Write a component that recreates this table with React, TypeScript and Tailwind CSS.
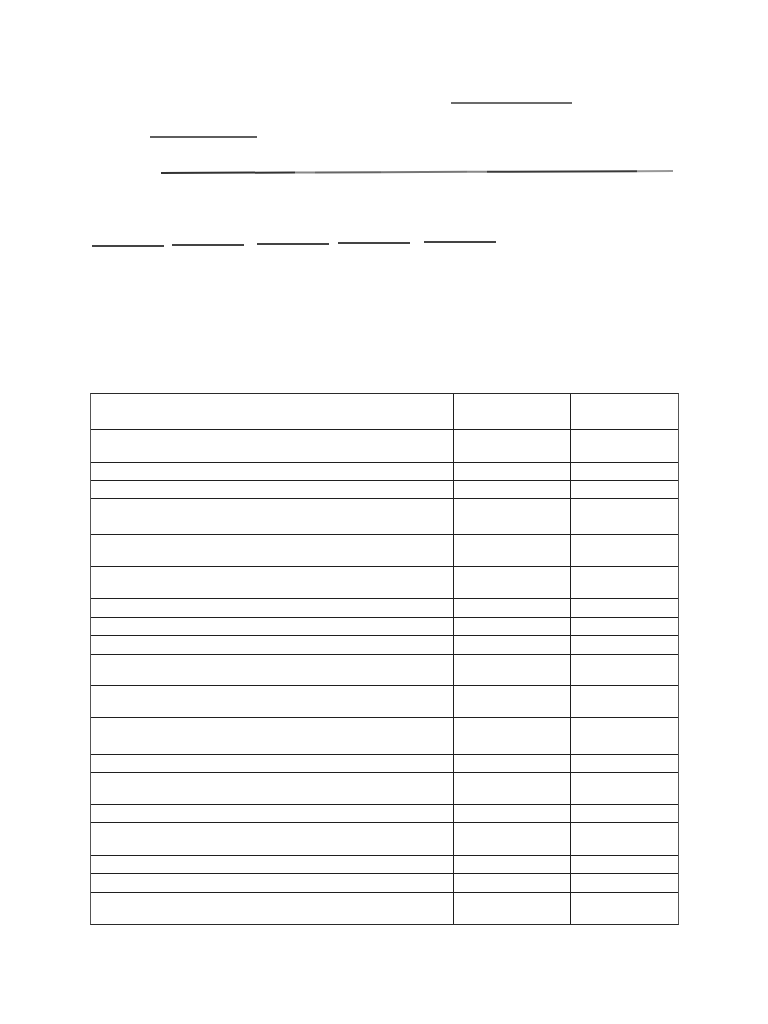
const rowHeights = [36, 33, 18, 18, 36, 32, 32, 19, 18, 19, 31, 32, 37, 18, 32, 18, 33, 18, 19, 31];

const segments = [
  { w: 'w-[72px]', gap: 'ml-0', top: 'mt-[4px]' },
  { w: 'w-[72px]', gap: 'ml-[8px]', top: 'mt-[3px]' },
  { w: 'w-[72px]', gap: 'ml-[13px]', top: 'mt-[2px]' },
  { w: 'w-[72px]', gap: 'ml-[9px]', top: 'mt-[1px]' },
  { w: 'w-[72px]', gap: 'ml-[14px]', top: 'mt-0' },
];

const App = () => {
  return (
    <div className="min-h-[1024px] w-[768px] bg-white pt-[102px] font-['Liberation_Sans',sans-serif]">
      {/* blank fields above the table */}
      <div className="ml-[451px] h-[2px] w-[121px] bg-[#6b6b6b]" />
      <div className="ml-[150px] mt-[32px] h-[2px] w-[107px] bg-[#5e5e5e]" />
      <div className="ml-[161px] mt-[33px] flex h-[2px] w-[512px] -rotate-[0.22deg]">
        <div className="h-full w-[134px] bg-[#333]" />
        <div className="h-full w-[20px] bg-[#888]" />
        <div className="h-full w-[66px] bg-[#666]" />
        <div className="h-full w-[86px] bg-[#777]" />
        <div className="h-full w-[20px] bg-[#888]" />
        <div className="h-full w-[150px] bg-[#3a3a3a]" />
        <div className="h-full w-[36px] bg-[#999]" />
      </div>
      <div className="ml-[92px] mt-[68px] flex items-start">
        {segments.map((s, i) => (
          <div key={i} className={`${s.w} ${s.gap} ${s.top} h-[2px] bg-[#444]`} />
        ))}
      </div>

      {/* empty table */}
      <div className="ml-[90px] mt-[146px] w-[589px] border border-[#2a2a2a] border-l-[#555] border-r-[#555]">
        {rowHeights.map((h, i) => (
          <div
            key={i}
            className={`grid grid-cols-[363px_117px_1fr] ${i < rowHeights.length - 1 ? 'border-b border-[#1f1f1f]' : ''}`}
            style={{ height: h }}
          >
            <div className="border-r border-[#1f1f1f]" />
            <div className="border-r border-[#1f1f1f]" />
            <div />
          </div>
        ))}
      </div>
    </div>
  );
};

export default App;
